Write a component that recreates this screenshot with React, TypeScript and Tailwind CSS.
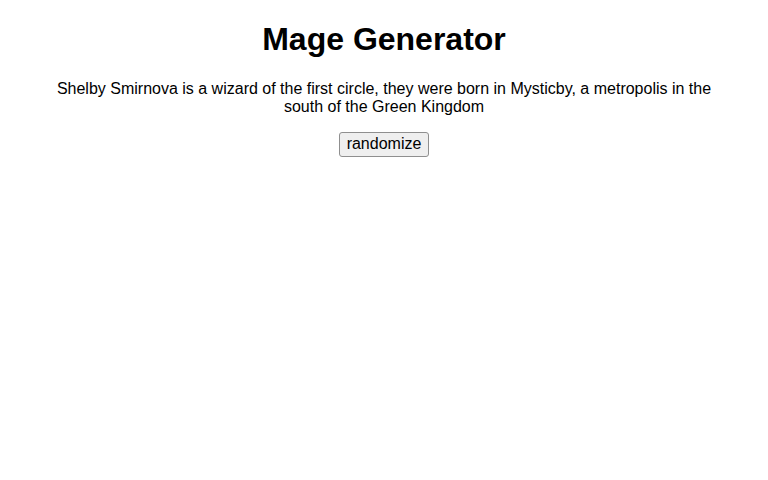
import { useState } from "react";

const firstNames = ["Shelby", "Morgan", "Alden", "Rowan", "Ivy"];
const lastNames = ["Smirnova", "Blackwood", "Thorne", "Ashford", "Vale"];
const circles = ["first", "second", "third", "fourth", "fifth"];
const cities = ["Mysticby", "Emberton", "Frostholm", "Ravenmoor", "Starhaven"];
const cityKinds = ["metropolis", "village", "town", "city", "hamlet"];
const regions = ["south", "north", "east", "west"];
const kingdoms = ["Green Kingdom", "Iron Kingdom", "Silver Kingdom", "Azure Kingdom"];

const pick = <T,>(list: T[]) => list[Math.floor(Math.random() * list.length)];

type Mage = {
  first: string;
  last: string;
  circle: string;
  city: string;
  kind: string;
  region: string;
  kingdom: string;
};

const randomMage = (): Mage => ({
  first: pick(firstNames),
  last: pick(lastNames),
  circle: pick(circles),
  city: pick(cities),
  kind: pick(cityKinds),
  region: pick(regions),
  kingdom: pick(kingdoms),
});

export default function App() {
  const [mage, setMage] = useState<Mage>({
    first: "Shelby",
    last: "Smirnova",
    circle: "first",
    city: "Mysticby",
    kind: "metropolis",
    region: "south",
    kingdom: "Green Kingdom",
  });

  return (
    <div className="bg-white text-black text-center font-['Liberation_Sans',Arial,sans-serif] pt-px">
      <h1 className="text-[32px] font-bold leading-[1.15] mt-[20.44px] mb-[21.44px]">
        Mage Generator
      </h1>
      <p className="text-base leading-[1.15] my-4 max-w-[672px] mx-auto">
        {mage.first} {mage.last} is a wizard of the {mage.circle} circle, they
        were born in {mage.city}, a {mage.kind} in the {mage.region} of the{" "}
        {mage.kingdom}
      </p>
      <button
        type="button"
        onClick={() => setMage(randomMage())}
        className="text-base leading-[1.15] px-[7px] py-[2px] border border-[#8f8f8f] rounded-[3px] bg-[#efefef] hover:bg-[#e5e5e5]"
      >
        randomize
      </button>
    </div>
  );
}
